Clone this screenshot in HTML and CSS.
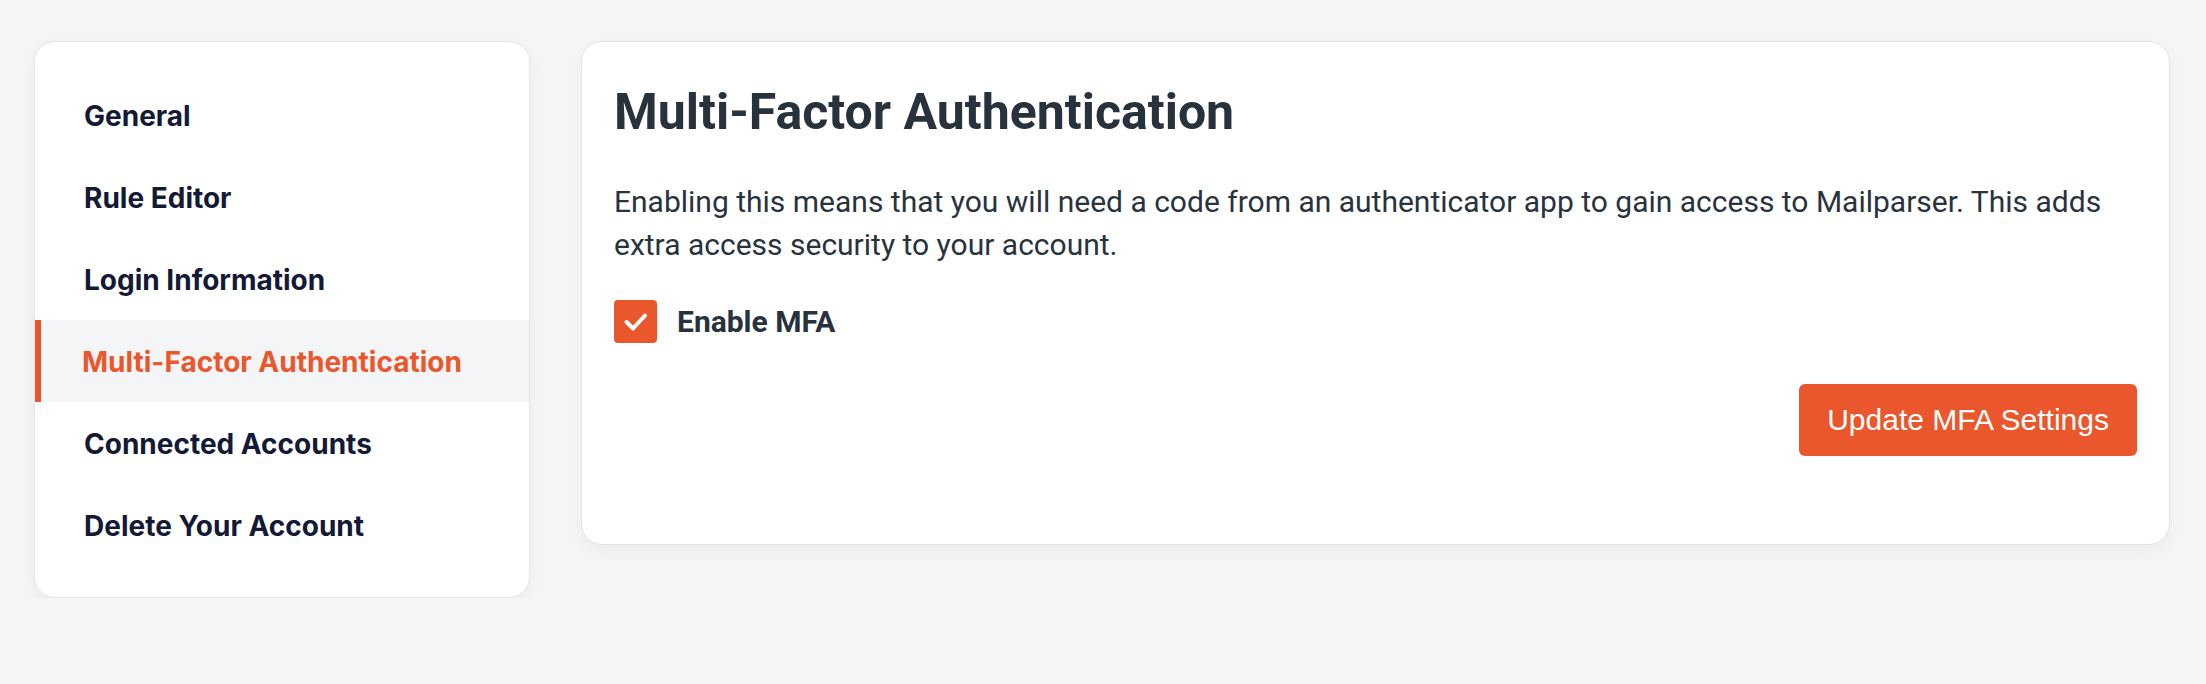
FILE: index.html
```html
<!DOCTYPE html>
<html lang="en">
<head>
<meta charset="utf-8">
<title>Settings - Multi-Factor Authentication</title>
<link rel="stylesheet" href="styles.css">
</head>
<body>
<div class="page">
  <nav class="sidebar">
    <a class="nav-item" href="#">General</a>
    <a class="nav-item" href="#">Rule Editor</a>
    <a class="nav-item" href="#">Login Information</a>
    <a class="nav-item active" href="#">Multi-Factor Authentication</a>
    <a class="nav-item" href="#">Connected Accounts</a>
    <a class="nav-item" href="#">Delete Your Account</a>
  </nav>
  <main class="card">
    <h1 class="title">Multi-Factor Authentication</h1>
    <p class="desc">Enabling this means that you will need a code from an authenticator app to gain access to Mailparser. This adds extra access security to your account.</p>
    <label class="check-row">
      <span class="checkbox">
        <svg viewBox="0 0 43 43" width="43" height="43" aria-hidden="true"><polyline points="12.5,22 19,28.5 31,15.5" fill="none" stroke="#ffffff" stroke-width="4" stroke-linecap="round" stroke-linejoin="round"/></svg>
      </span>
      <span class="check-label">Enable MFA</span>
    </label>
    <div class="actions">
      <button class="btn" type="button">Update MFA Settings</button>
    </div>
  </main>
</div>
</body>
</html>
```
FILE: styles.css
```css
html, body {
  margin: 0;
  padding: 0;
  background: #f4f5f4;
}
body {
  font-family: Roboto, "Liberation Sans", sans-serif;
}
.page {
  display: flex;
  align-items: flex-start;
  gap: 51px;
  padding: 41px 36px 0 34px;
}
.sidebar {
  flex: 0 0 496px;
  box-sizing: border-box;
  display: flex;
  flex-direction: column;
  background: #ffffff;
  border: 1px solid #e4e6ec;
  border-radius: 21px;
  padding: 32px 0 31px;
  box-shadow: 0 4px 14px rgba(20, 26, 56, 0.05);
  overflow: hidden;
}
.nav-item {
  display: block;
  height: 82px;
  line-height: 84px;
  padding-left: 49px;
  font-family: Inter, "Noto Sans", sans-serif;
  font-weight: 700;
  font-size: 28px;
  color: #131a37;
  text-decoration: none;
  white-space: nowrap;
}
.nav-item.active {
  color: #eb572c;
  background: #f4f5f7;
  border-left: 6px solid #eb572c;
  padding-left: 41px;
}
.card {
  flex: 1 1 auto;
  box-sizing: border-box;
  height: 504px;
  background: #ffffff;
  border: 1px solid #e2e3e3;
  border-radius: 21px;
  padding: 40px 32px 0;
  box-shadow: 0 6px 16px rgba(0, 0, 0, 0.04);
}
.title {
  margin: 0;
  font-family: Roboto, sans-serif;
  font-weight: 700;
  font-size: 50px;
  line-height: 60px;
  color: #28323d;
}
.desc {
  margin: 39px 0 0;
  font-family: Roboto, sans-serif;
  font-weight: 400;
  font-size: 30px;
  line-height: 42.5px;
  color: #29333e;
}
.check-row {
  display: flex;
  align-items: center;
  gap: 20px;
  margin-top: 34px;
}
.checkbox {
  width: 43px;
  height: 43px;
  border-radius: 4px;
  background: #eb572c;
  display: flex;
}
.checkbox svg {
  display: block;
}
.check-label {
  font-family: Roboto, sans-serif;
  font-weight: 700;
  font-size: 30px;
  line-height: 43px;
  color: #28323d;
}
.actions {
  display: flex;
  justify-content: flex-end;
  margin-top: 41px;
}
.btn {
  height: 72px;
  padding: 0 28px;
  border: none;
  border-radius: 6px;
  background: #eb572c;
  color: #ffffff;
  font-family: "Liberation Sans", Arial, sans-serif;
  font-size: 30px;
  font-weight: 400;
  cursor: pointer;
}
```
